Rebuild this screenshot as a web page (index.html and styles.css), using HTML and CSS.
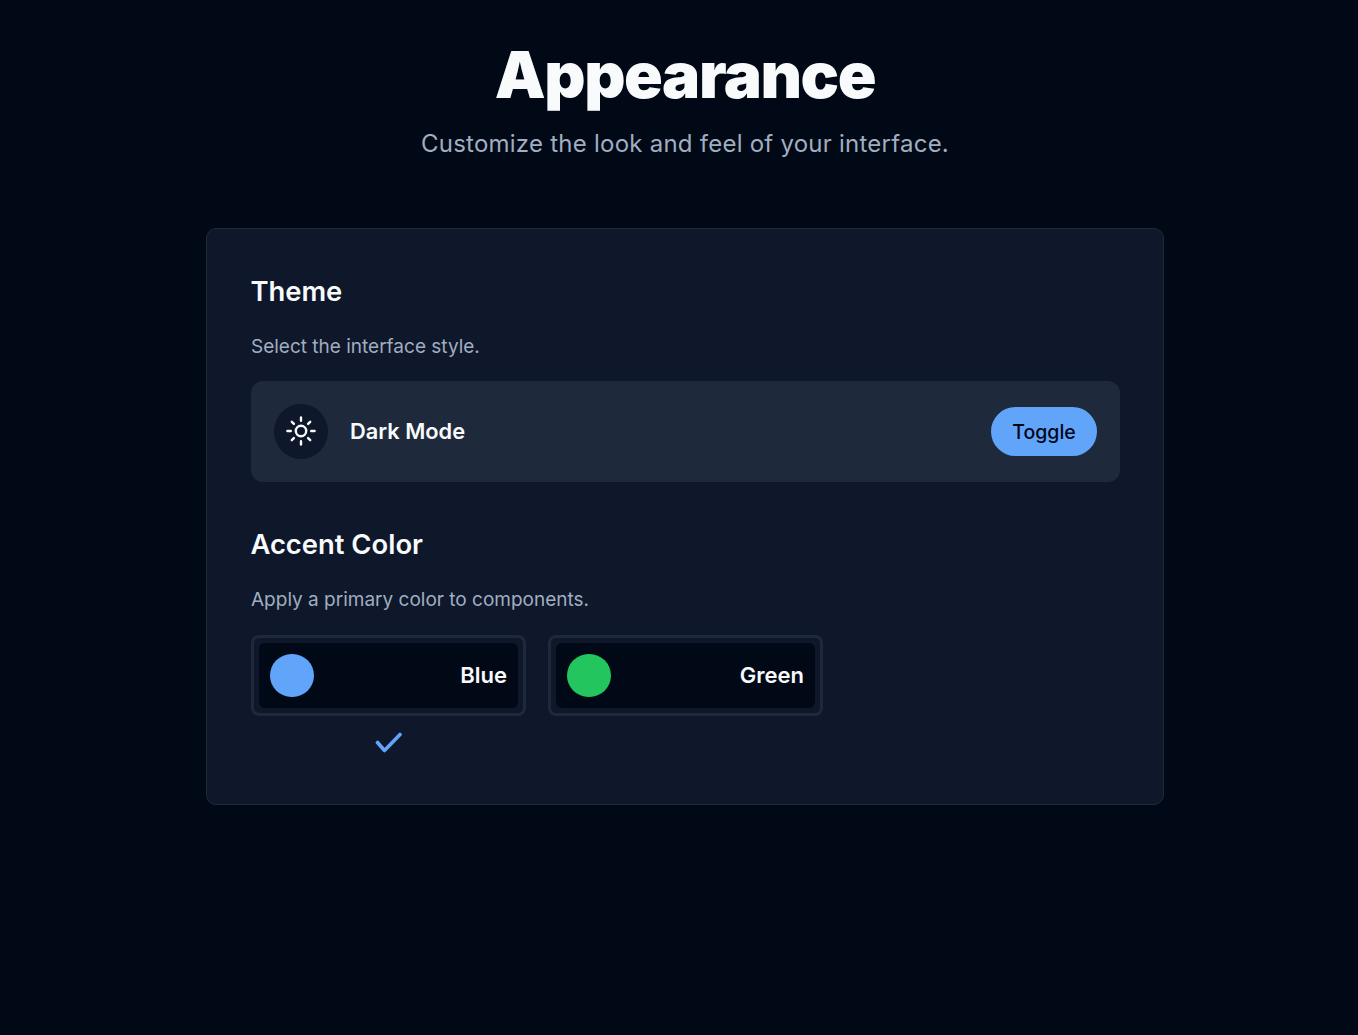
FILE: index.html

```html
<!DOCTYPE html>
<html>
<head>
<title>Appearance</title>
<meta name="viewport" content="width=device-width, initial-scale=1.0">
<link rel="stylesheet" href="styles.css">
</head>
<body>

<header class="page-head">
    <h1>Appearance</h1>
    <p>Customize the look and feel of your interface.</p>
</header>

<main class="card">
    <section class="theme">
        <h2>Theme</h2>
        <p class="hint">Select the interface style.</p>
        <div class="mode-row">
            <div class="mode-label">
                <span class="mode-icon">
                    <svg width="32" height="32" viewBox="0 0 32 32" fill="none" stroke="#f8fafc" stroke-width="2.4" stroke-linecap="round">
                        <circle cx="16" cy="16" r="5.2"/>
                        <path d="M16 2.4v3.4M16 26.2v3.4M2.4 16h3.4M26.2 16h3.4M6.8 6.8l2.1 2.1M23.1 23.1l2.1 2.1M6.8 25.2l2.1-2.1M23.1 8.9l2.1-2.1"/>
                    </svg>
                </span>
                <span>Dark Mode</span>
            </div>
            <button type="button" class="toggle-btn">Toggle</button>
        </div>
    </section>

    <section class="accent">
        <h2>Accent Color</h2>
        <p class="hint">Apply a primary color to components.</p>
        <div class="swatches">
            <div class="swatch-col">
                <div class="swatch">
                    <div class="swatch-inner">
                        <span class="dot dot-blue"></span>
                        <span class="swatch-name">Blue</span>
                    </div>
                </div>
                <svg class="check" width="28" height="22" viewBox="0 0 28 22" fill="none" stroke="#60a5fa" stroke-width="3.6" stroke-linecap="round" stroke-linejoin="round">
                    <path d="M2.5 10.5L9.5 18.5l15.5-16"/>
                </svg>
            </div>
            <div class="swatch-col">
                <div class="swatch">
                    <div class="swatch-inner">
                        <span class="dot dot-green"></span>
                        <span class="swatch-name">Green</span>
                    </div>
                </div>
            </div>
        </div>
    </section>
</main>

</body>
</html>
```

FILE: styles.css

```css
body { margin: 0; min-height: 1035px; background-color: #010816; color: #f8fafc; font-family: Inter, "Liberation Sans", sans-serif; }
.page-head { text-align: center; padding-top: 36px; padding-left: 12px; }
h1 { margin: 0; font-size: 64px; line-height: 78px; font-weight: 900; letter-spacing: -1.4px; color: #f8fafc; }
.page-head p { margin: 14px 0 0; font-size: 24px; line-height: 32px; letter-spacing: 0.24px; color: #a0aec0; }
.card { box-sizing: border-box; width: 958px; margin: 68px 0 0 206px; padding: 44px 43px 50px 44px; background-color: #0f172a; border: 1px solid #1e293b; border-radius: 10px; }
h2 { margin: 0 0 0 -0.6px; font-size: 27.4px; line-height: 36px; font-weight: 600; color: #f8fafc; }
.hint { margin: 23.5px 0 0; font-size: 19px; line-height: 28px; color: #a0aec0; }
.accent .hint { margin-top: 24.5px; }
.mode-row { display: flex; justify-content: space-between; align-items: center; margin-top: 20px; padding: 0 23px; height: 101px; background-color: #1e293b; border-radius: 12px; }
.mode-label { display: flex; align-items: center; gap: 22px; font-size: 21.8px; font-weight: 600; }
.mode-icon { display: flex; align-items: center; justify-content: center; width: 54px; height: 55px; border-radius: 50%; background-color: #0f172a; }
.toggle-btn { width: 106px; height: 49px; margin-top: 1px; padding: 0; border: none; border-radius: 25px; background-color: #60a5fa; color: #020617; font-family: inherit; font-size: 19.5px; font-weight: 500; }
.accent { margin-top: 44px; }
.swatches { display: flex; gap: 22px; margin-top: 21px; }
.swatch-col { display: flex; flex-direction: column; align-items: center; width: 275px; }
.swatch { box-sizing: border-box; width: 100%; height: 81px; padding: 5px; border: 3px solid #1e293b; border-radius: 8px; }
.swatch-inner { display: flex; justify-content: space-between; align-items: center; height: 100%; padding: 0 11px; background-color: #010816; border-radius: 6px; font-size: 22px; font-weight: 600; }
.swatch-name { padding-bottom: 2px; }
.dot { width: 43.5px; height: 43.5px; border-radius: 50%; }
.dot-blue { background-color: #60a5fa; }
.dot-green { background-color: #22c55e; }
.check { margin-top: 16px; }
```
